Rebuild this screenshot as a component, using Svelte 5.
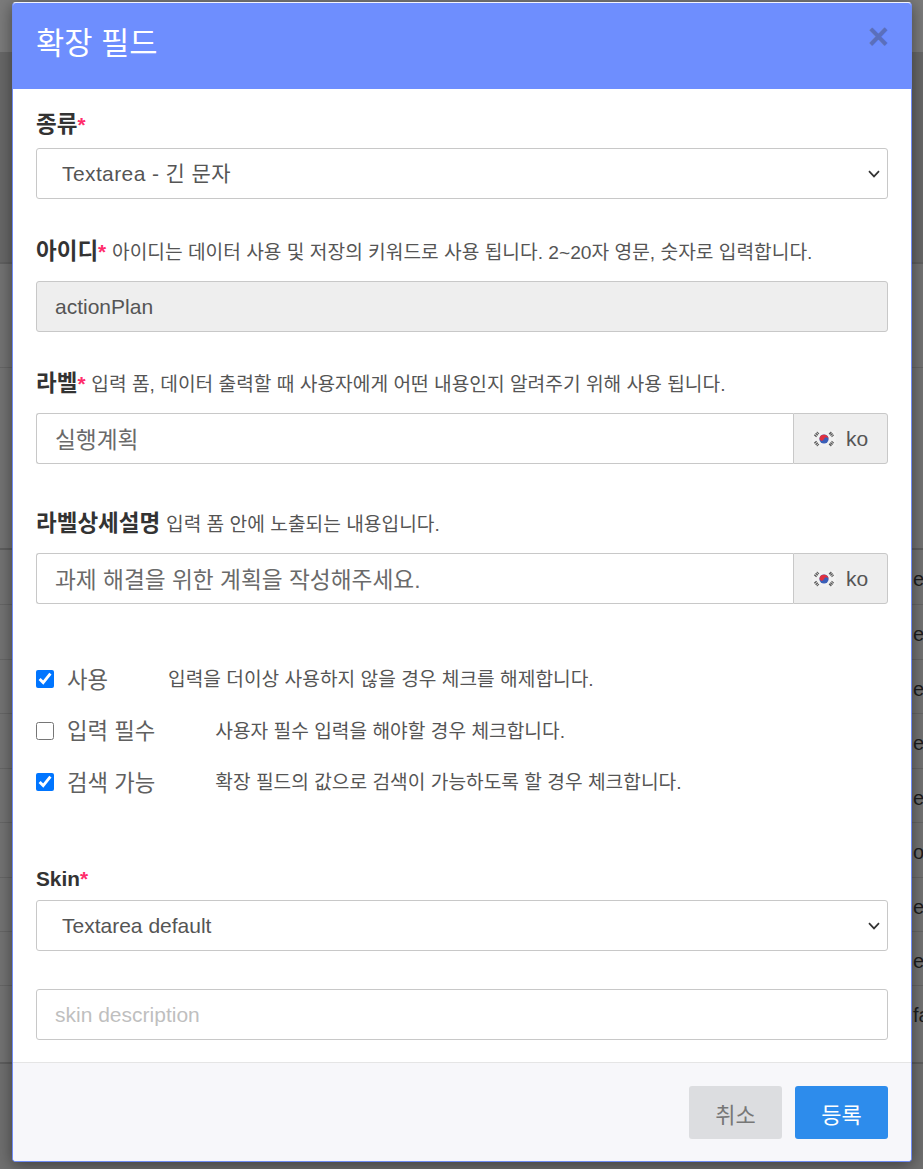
<script>
  const rows = [
    { h: 52, cls: 'top', t: '' },
    { h: 212, cls: 'head', t: '' },
    { h: 104, cls: '', t: '' },
    { h: 182, cls: 'strong', t: '' },
    { h: 55, cls: '', t: 'e' },
    { h: 55, cls: '', t: 'e' },
    { h: 54, cls: '', t: 'e' },
    { h: 55, cls: '', t: 'e' },
    { h: 54, cls: '', t: 'e' },
    { h: 55, cls: '', t: 'o' },
    { h: 54, cls: '', t: 'e' },
    { h: 54, cls: '', t: 'er' },
    { h: 78, cls: 'strong last', t: 'fa' }
  ];
</script>

{#snippet flag()}
  <svg class="flag" viewBox="0 0 24 16" aria-hidden="true">
    <rect width="24" height="16" fill="#f1f1f1" />
    <circle cx="12" cy="8" r="4.6" fill="#3a5fb8" />
    <path d="M7.5 7.1a4.6 4.6 0 0 1 9 1.8 2.3 2.3 0 0 0-4.5-.9 2.3 2.3 0 0 1-4.5-.9z" fill="#e0303f" />
    <g stroke="#5c5c5c" stroke-width="3" stroke-dasharray="1.4 .5">
      <path d="M3 5.2 6.2 1.6M17.8 1.6 21 5.2M3 10.8l3.2 3.6M17.8 14.4l3.2-3.6" />
    </g>
  </svg>
{/snippet}

{#snippet chevron()}
  <svg class="chev" viewBox="0 0 12 8" aria-hidden="true">
    <path d="M1 1.2 6 6.4l5-5.2" fill="none" stroke="#333" stroke-width="1.7" />
  </svg>
{/snippet}

<div class="page">
  <div class="behind">
    {#each rows as r}
      <div class="row {r.cls}" style="height:{r.h}px"><span>{r.t}</span></div>
    {/each}
  </div>

  <div class="modal">
    <header class="modal-head">
      <h1>확장 필드</h1>
      <button class="close" type="button" aria-label="닫기">×</button>
    </header>

    <div class="modal-body">
      <div class="label first"><b>종류</b><i>*</i></div>
      <div class="sel">
        <select class="control mixed">
          <option>Textarea - 긴 문자</option>
        </select>
        {@render chevron()}
      </div>

      <div class="label g37"><b>아이디</b><i>*</i> <small>아이디는 데이터 사용 및 저장의 키워드로 사용 됩니다. 2~20자 영문, 숫자로 입력합니다.</small></div>
      <input class="control" type="text" value="actionPlan" disabled />

      <div class="label g36"><b>라벨</b><i>*</i> <small>입력 폼, 데이터 출력할 때 사용자에게 어떤 내용인지 알려주기 위해 사용 됩니다.</small></div>
      <div class="group">
        <input class="control ko" type="text" value="실행계획" />
        <div class="addon">{@render flag()}<span>ko</span></div>
      </div>

      <div class="label g44"><b>라벨상세설명</b> <small>입력 폼 안에 노출되는 내용입니다.</small></div>
      <div class="group">
        <input class="control ko" type="text" value="과제 해결을 위한 계획을 작성해주세요." />
        <div class="addon">{@render flag()}<span>ko</span></div>
      </div>

      <div class="checks">
        <label class="check">
          <input type="checkbox" checked />
          <span class="name">사용</span>
          <small>입력을 더이상 사용하지 않을 경우 체크를 해제합니다.</small>
        </label>
        <label class="check">
          <input type="checkbox" />
          <span class="name">입력 필수</span>
          <small>사용자 필수 입력을 해야할 경우 체크합니다.</small>
        </label>
        <label class="check">
          <input type="checkbox" checked />
          <span class="name">검색 가능</span>
          <small>확장 필드의 값으로 검색이 가능하도록 할 경우 체크합니다.</small>
        </label>
      </div>

      <div class="label skin"><b class="latin">Skin</b><i>*</i></div>
      <div class="sel">
        <select class="control">
          <option>Textarea default</option>
        </select>
        {@render chevron()}
      </div>

      <input class="control desc" type="text" placeholder="skin description" />
    </div>

    <footer class="modal-foot">
      <button class="btn cancel" type="button">취소</button>
      <button class="btn ok" type="button">등록</button>
    </footer>
  </div>
</div>

<style>
  :global(body) {
    margin: 0;
    font-family: "Liberation Sans", "Noto Sans CJK KR", sans-serif;
  }
  .page {
    position: relative;
    width: 923px;
    height: 1169px;
    overflow: hidden;
    background: #6f6f6f;
    padding-top: 2px;
    box-sizing: border-box;
  }
  .behind {
    position: absolute;
    inset: 0;
    display: flex;
    flex-direction: column;
  }
  .row {
    box-sizing: border-box;
    flex: none;
    background: #737373;
    border-bottom: 1px solid #666;
    padding-left: 913px;
    padding-top: 5px;
    display: flex;
    align-items: center;
    color: #1d1d1d;
    font-size: 20px;
    white-space: nowrap;
    overflow: hidden;
  }
  .row.top { background: #7b7b7b; border-bottom: 0; }
  .row.head { background: #686868; border-bottom: 2px solid #606060; }
  .row.strong { border-bottom: 2px solid #5e5e5e; }
  .row.last { align-items: flex-start; padding-top: 18px; }

  .modal {
    position: relative;
    margin-left: 12px;
    width: 900px;
    box-sizing: border-box;
    height: 1160px;
    display: flex;
    flex-direction: column;
    background: #fff;
    border: 1px solid #6f8cf5;
    border-top-color: #f2f4ff;
    border-radius: 4px;
    box-shadow: 0 3px 16px rgba(0, 0, 0, .45);
  }
  .modal-head {
    height: 86px;
    flex: none;
    background: #6e8efe;
    display: flex;
    justify-content: space-between;
    align-items: flex-start;
    padding: 0 23px;
    box-sizing: border-box;
    border-radius: 3px 3px 0 0;
  }
  h1 {
    margin: 22px 0 0;
    color: #fff;
    font-size: 30.7px;
    line-height: 38px;
    font-weight: 400;
  }
  .close {
    border: 0;
    background: none;
    padding: 0;
    margin: 14px -1px 0 0;
    color: #5a6fbc;
    font: 700 36px/40px "Liberation Sans", sans-serif;
  }
  .modal-body {
    flex: 1;
    padding: 0 23px;
  }
  .label {
    height: 30px;
    line-height: 32px;
    font-size: 20.8px;
    color: #333;
    white-space: nowrap;
  }
  .label b { font-weight: 700; color: #333; font-size: 22.5px; }
  .label b.latin { font-size: 20.8px; }
  .label i { font-style: normal; font-weight: 700; color: #ff2d6b; }
  small {
    font-size: 19.2px;
    color: #555;
  }
  .first { margin: 20px 0 9px; }
  .g37 { margin: 37px 0 15px; }
  .g36 { margin: 36px 0 15px; }
  .g44 { margin: 44px 0 15px; }
  .control {
    display: block;
    box-sizing: border-box;
    width: 100%;
    height: 51px;
    border: 1px solid #c8c8c8;
    border-radius: 3px;
    background: #fff;
    color: #555;
    font: 21px "Liberation Sans", "Noto Sans CJK KR", sans-serif;
    padding: 0 18px;
    outline: none;
    opacity: 1;
  }
  .control.ko { font-size: 22.7px; color: #6a6a6a; }
  .control:disabled { background: #eee; }
  .control::placeholder { color: #bfbfbf; }
  .sel { position: relative; }
  .sel select {
    appearance: none;
    padding: 0 40px 0 25px;
  }
  .sel select.mixed { letter-spacing: .4px; }
  .chev {
    position: absolute;
    right: 8px;
    top: 22px;
    width: 12px;
    height: 8px;
    pointer-events: none;
  }
  .group { display: flex; }
  .group .control {
    flex: 1;
    min-width: 0;
    border-radius: 3px 0 0 3px;
    border-right: 0;
  }
  .addon {
    flex: none;
    box-sizing: border-box;
    width: 95px;
    height: 51px;
    display: flex;
    align-items: center;
    gap: 10px;
    padding-left: 18px;
    background: #eee;
    border: 1px solid #c8c8c8;
    border-radius: 0 3px 3px 0;
    color: #555;
    font-size: 21px;
  }
  .flag { width: 24px; height: 16px; flex: none; }
  .checks {
    margin-top: 60px;
    display: flex;
    flex-direction: column;
    gap: 21.5px;
  }
  .check {
    height: 30px;
    display: flex;
    align-items: center;
    white-space: nowrap;
  }
  .check input {
    width: 18px;
    height: 18px;
    margin: 0 13px 0 0;
    flex: none;
  }
  .check small { margin-bottom: 2px; }
  .name {
    font-size: 22.3px;
    color: #606060;
    margin: 0 60px 3px 0;
  }
  .skin { margin: 66px 0 7px; }
  .desc { margin-top: 38px; }
  .modal-foot {
    flex: none;
    height: 99px;
    box-sizing: border-box;
    background: #f7f7fa;
    border-top: 1px solid #e5e5e5;
    display: flex;
    justify-content: flex-end;
    gap: 13px;
    padding: 23px 23px 0 0;
    border-radius: 0 0 3px 3px;
  }
  .btn {
    width: 93px;
    height: 53px;
    border: 0;
    border-radius: 3px;
    font: 22px "Liberation Sans", "Noto Sans CJK KR", sans-serif;
  }
  .cancel { background: #dcdde0; color: #777; }
  .ok { background: #2d8cec; color: #fff; }
</style>
